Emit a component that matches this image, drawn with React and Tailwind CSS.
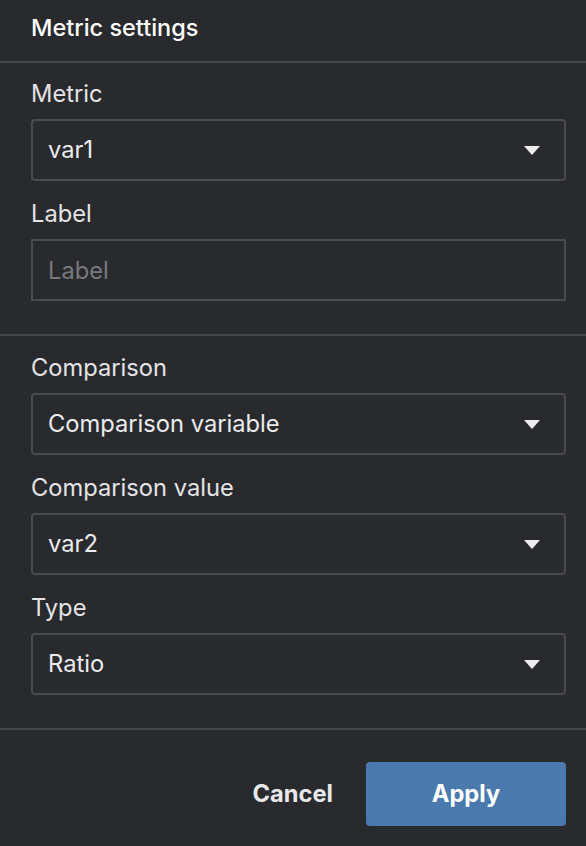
import { useState } from 'react';

const font = { fontFamily: 'Inter, "Noto Sans", "Liberation Sans", sans-serif' };

function Caret() {
  return (
    <svg width="16" height="9" viewBox="0 0 16 9" className="shrink-0">
      <path d="M0 0 L16 0 L8 9 Z" fill="#ececec" />
    </svg>
  );
}

function Field({ label, children }) {
  return (
    <div className="flex flex-col">
      <label className="pt-[1px] text-[23.7px] leading-[26px] text-[#e4e4e6] mb-[12px]">{label}</label>
      {children}
    </div>
  );
}

function Select({ value }) {
  return (
    <div className="h-[62px] border-2 border-[#4a4b4e] rounded-[4px] flex items-center justify-between pl-[15px] pr-[24px]">
      <span className="text-[23.7px] text-[#ebebed]">{value}</span>
      <Caret />
    </div>
  );
}

export default function App() {
  const [label, setLabel] = useState('');

  return (
    <div className="w-[586px] h-[846px] bg-[#292a2d] flex flex-col" style={font}>
      {/* Header */}
      <div className="h-[61px] pl-[31px] pt-[15px]">
        <h2 className="text-[23.5px] leading-[26px] font-medium text-white">Metric settings</h2>
      </div>
      <div className="h-[2px] bg-[#46474a]" />

      {/* Metric section */}
      <div className="pl-[31px] pr-[20px] pt-[17px] pb-[33px] flex flex-col gap-[19px]">
        <Field label="Metric">
          <Select value="var1" />
        </Field>
        <Field label="Label">
          <input
            value={label}
            onChange={e => setLabel(e.target.value)}
            placeholder="Label"
            className="h-[62px] border-2 border-[#4a4b4e] bg-transparent px-[15px] text-[23.7px] text-[#ebebed] placeholder-[#78797c] outline-none"
          />
        </Field>
      </div>
      <div className="h-[2px] bg-[#46474a]" />

      {/* Comparison section */}
      <div className="pl-[31px] pr-[20px] pt-[18px] pb-[33px] flex flex-col gap-[19px]">
        <Field label="Comparison">
          <Select value="Comparison variable" />
        </Field>
        <Field label="Comparison value">
          <Select value="var2" />
        </Field>
        <Field label="Type">
          <Select value="Ratio" />
        </Field>
      </div>
      <div className="h-[2px] bg-[#46474a]" />

      {/* Footer */}
      <div className="flex-1 flex items-start justify-end pr-[20px] pt-[32px] gap-[12px]">
        <button className="h-[64px] px-[21px] text-[23.7px] font-bold text-[#e8e8ea]">Cancel</button>
        <button className="h-[64px] w-[200px] rounded-[4px] bg-[#4a7aad] text-[23.7px] font-bold text-white">Apply</button>
      </div>
    </div>
  );
}
